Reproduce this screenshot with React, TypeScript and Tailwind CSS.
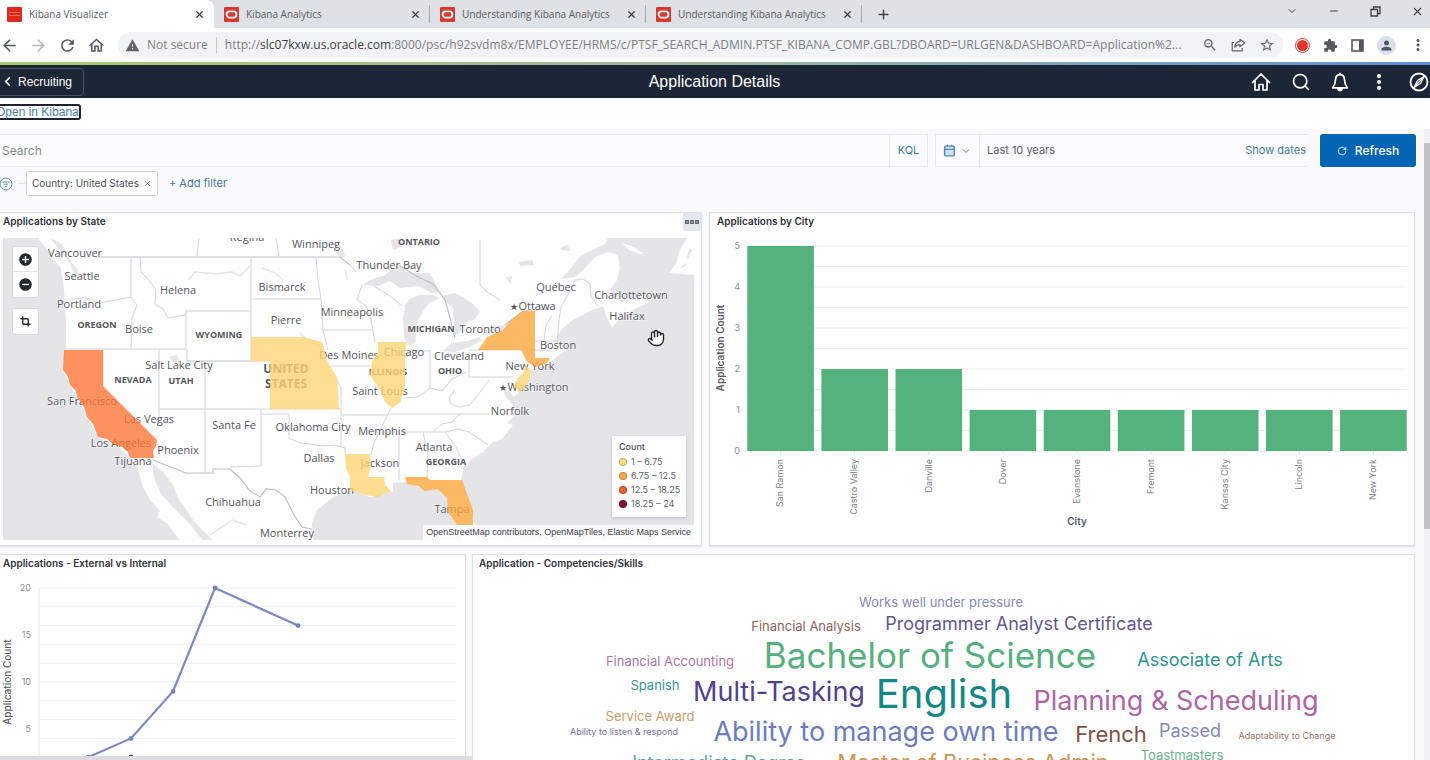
import React from "react";
import {
  Calendar,
  ChevronDown,
  ChevronLeft,
  Crop,
  Hand,
  Minus,
  MoreVertical,
  Plus,
  RotateCw,
  Search,
  X,
} from "lucide-react";
import {
  MdArrowBack,
  MdArrowForward,
  MdExtension,
  MdMoreVert,
  MdOutlineHome,
  MdPerson,
  MdRefresh,
  MdStarBorder,
  MdWarning,
  MdZoomOut,
} from "react-icons/md";

const tabs = [
  { title: "Kibana Visualizer", active: true },
  { title: "Kibana Analytics", active: false },
  { title: "Understanding Kibana Analytics", active: false },
  { title: "Understanding Kibana Analytics", active: false },
];

const cities = [
  { name: "San Ramon", count: 5 },
  { name: "Castro Valley", count: 2 },
  { name: "Danville", count: 2 },
  { name: "Dover", count: 1 },
  { name: "Evanstone", count: 1 },
  { name: "Fremont", count: 1 },
  { name: "Kansas City", count: 1 },
  { name: "Lincoln", count: 1 },
  { name: "New York", count: 1 },
];

// x is the centre of the word, y its baseline
const skills = [
  { text: "Works well under pressure", x: 941, y: 607, size: 13, color: "#8688b8" },
  { text: "Financial Analysis", x: 806, y: 631, size: 13, color: "#8f655a" },
  { text: "Programmer Analyst Certificate", x: 1019, y: 630, size: 18, color: "#61578f" },
  { text: "Bachelor of Science", x: 930, y: 668, size: 35, color: "#54b07c" },
  { text: "Associate of Arts", x: 1210, y: 666, size: 18, color: "#2b9590" },
  { text: "Financial Accounting", x: 670, y: 666, size: 13, color: "#ae76a6" },
  { text: "Spanish", x: 655, y: 690, size: 13, color: "#3a9690" },
  { text: "Multi-Tasking", x: 779, y: 701, size: 27, color: "#523f8e" },
  { text: "English", x: 944, y: 708, size: 40, color: "#148886" },
  { text: "Planning & Scheduling", x: 1176, y: 710, size: 27, color: "#ad65a5" },
  { text: "Service Award", x: 650, y: 721, size: 13, color: "#cb9c69" },
  { text: "Ability to listen & respond", x: 624, y: 735, size: 9, color: "#77709a" },
  { text: "Ability to manage own time", x: 886, y: 741, size: 27, color: "#6c7cbe" },
  { text: "French", x: 1111, y: 742, size: 22, color: "#84503f" },
  { text: "Passed", x: 1190, y: 737, size: 18, color: "#8089b9" },
  { text: "Adaptability to Change", x: 1287, y: 739, size: 9, color: "#98736c" },
  { text: "Toastmasters", x: 1182, y: 760, size: 13, color: "#69b58a" },
  { text: "Intermediate Degree", x: 719, y: 769, size: 18, color: "#5aa79f" },
  { text: "Master of Business Admin", x: 973, y: 770, size: 22, color: "#cf9450" },
];

const places = [
  { name: "Regina", x: 247, y: 241 },
  { name: "Winnipeg", x: 316, y: 248 },
  { name: "Vancouver", x: 75, y: 257 },
  { name: "Thunder Bay", x: 389, y: 269 },
  { name: "Seattle", x: 82, y: 280 },
  { name: "Helena", x: 178, y: 294 },
  { name: "Bismarck", x: 282, y: 291 },
  { name: "Québec", x: 556, y: 291 },
  { name: "Charlottetown", x: 631, y: 299 },
  { name: "Portland", x: 79, y: 308 },
  { name: "Ottawa", x: 533, y: 310, capital: true },
  { name: "Halifax", x: 627, y: 320 },
  { name: "Minneapolis", x: 352, y: 316 },
  { name: "Pierre", x: 286, y: 324 },
  { name: "Boise", x: 139, y: 333 },
  { name: "Toronto", x: 480, y: 333 },
  { name: "Boston", x: 558, y: 349 },
  { name: "Chicago", x: 404, y: 356 },
  { name: "Cleveland", x: 459, y: 360 },
  { name: "Des Moines", x: 349, y: 359 },
  { name: "Salt Lake City", x: 179, y: 369 },
  { name: "New York", x: 530, y: 370 },
  { name: "Washington", x: 534, y: 391, capital: true },
  { name: "Saint Louis", x: 380, y: 395 },
  { name: "San Francisco", x: 82, y: 405 },
  { name: "Norfolk", x: 510, y: 415 },
  { name: "Las Vegas", x: 149, y: 423 },
  { name: "Santa Fe", x: 234, y: 429 },
  { name: "Oklahoma City", x: 313, y: 431 },
  { name: "Memphis", x: 382, y: 435 },
  { name: "Los Angeles", x: 121, y: 447 },
  { name: "Atlanta", x: 434, y: 451 },
  { name: "Phoenix", x: 178, y: 454 },
  { name: "Tijuana", x: 133, y: 465 },
  { name: "Dallas", x: 319, y: 462 },
  { name: "Jackson", x: 380, y: 467 },
  { name: "Houston", x: 332, y: 494 },
  { name: "Chihuahua", x: 233, y: 506 },
  { name: "Tampa", x: 452, y: 513 },
  { name: "Monterrey", x: 287, y: 537 },
];

const regions = [
  { name: "ONTARIO", x: 419, y: 245 },
  { name: "OREGON", x: 97, y: 328 },
  { name: "WYOMING", x: 219, y: 338 },
  { name: "MICHIGAN", x: 431, y: 332 },
  { name: "OHIO", x: 450, y: 374 },
  { name: "ILLINOIS", x: 388, y: 375 },
  { name: "NEVADA", x: 133, y: 383 },
  { name: "UTAH", x: 181, y: 384 },
  { name: "GEORGIA", x: 446, y: 465 },
];

const legend = [
  { label: "1 – 6.75", dot: "bg-[#fdd97e]" },
  { label: "6.75 – 12.5", dot: "bg-[#f8a548]" },
  { label: "12.5 – 18.25", dot: "bg-[#ee5f2b]" },
  { label: "18.25 – 24", dot: "bg-[#80142f]" },
];

const OracleIcon = () => (
  <svg viewBox="0 0 15 15" className="size-[15px] shrink-0" aria-hidden="true">
    <rect width="15" height="15" rx="1" fill="#d8392f" />
    <rect x="2.6" y="4.4" width="9.8" height="6.2" rx="3.1" fill="none" stroke="#fff" strokeWidth="1.8" />
  </svg>
);

const VisualizerIcon = () => (
  <svg viewBox="0 0 15 15" className="size-[15px] shrink-0" aria-hidden="true">
    <rect width="15" height="15" rx="1" fill="#e0281a" />
    <path d="M2 5.5h11M2 8.5h11" stroke="#f2705f" strokeWidth="1" />
  </svg>
);

const BrowserTabs = () => (
  <div className="flex h-7 shrink-0 bg-[#dee1e6]">
    {tabs.map((tab, i) => (
      <div
        key={i}
        className={
          tab.active
            ? "flex w-[214px] items-center rounded-tr-lg bg-white pr-[9px] pl-[7px]"
            : "flex w-[216px] items-center pl-[10px]"
        }
      >
        {tab.active ? <VisualizerIcon /> : <OracleIcon />}
        <span className="ml-[7px] flex-1 overflow-hidden text-[10px] whitespace-nowrap text-[#5b5e63]">{tab.title}</span>
        <button aria-label="Close tab" className="ml-2 text-[#3c4043]">
          <X size={11} strokeWidth={2.6} />
        </button>
        {!tab.active && <span className={i > 0 ? "ml-2 h-[18px] w-px bg-[#a4a7ad]" : "ml-2 h-[18px] w-px bg-[#a4a7ad]"} />}
      </div>
    ))}
    <button aria-label="New tab" className="ml-[14px] text-[#3c4043]">
      <Plus size={15} strokeWidth={2.2} />
    </button>
    <div className="ml-auto flex items-center gap-[30px] pr-[6px] pb-[6px] text-[#3c4043]">
      <button aria-label="Search tabs"><ChevronDown size={12} /></button>
      <button aria-label="Minimize"><Minus size={12} /></button>
      <button aria-label="Restore">
        <svg viewBox="0 0 11 11" className="size-[11px]" fill="none" stroke="currentColor" strokeWidth="1.3">
          <path d="M1 3.5h6.5V10H1zM3.5 3.5V1H10v6.5H7.5" />
        </svg>
      </button>
      <button aria-label="Close"><X size={13} /></button>
    </div>
  </div>
);

const AddressBar = () => (
  <div className="flex h-[34px] shrink-0 items-center bg-white pr-[3px] text-[#55585d]">
    <div className="flex items-center gap-[10px]">
      <button aria-label="Back"><MdArrowBack size={19} /></button>
      <button aria-label="Forward" className="text-[#b5b7ba]"><MdArrowForward size={19} /></button>
      <button aria-label="Reload"><MdRefresh size={19} /></button>
      <button aria-label="Home"><MdOutlineHome size={19} /></button>
    </div>
    <div className="ml-3 flex h-[26px] min-w-0 flex-1 items-center rounded-full bg-[#f1f3f4] pr-2 pl-[7px] text-xs text-[#7c7f84]">
      <MdWarning size={15} className="shrink-0 text-[#5f6368]" />
      <span className="ml-[7px] shrink-0">Not secure</span>
      <span className="mx-2 h-4 w-px bg-[#c4c7ca]" />
      <span className="min-w-0 flex-1 truncate">
        http://<span className="text-[#3c4043]">slc07kxw.us.oracle.com</span>
        :8000/psc/h92svdm8x/EMPLOYEE/HRMS/c/PTSF_SEARCH_ADMIN.PTSF_KIBANA_COMP.GBL?DBOARD=URLGEN&amp;DASHBOARD=Application%2...
      </span>
      <div className="ml-2 flex items-center gap-[13px] text-[#5f6368]">
        <button aria-label="Zoom"><MdZoomOut size={16} /></button>
        <button aria-label="Share">
          <svg viewBox="0 0 15 14" className="h-[14px] w-[15px]" fill="none" stroke="currentColor" strokeWidth="1.2" strokeLinejoin="round">
            <path d="M3 4.5H1.2v8.3h10V10" />
            <path d="M9 1.3 13.8 5 9 8.7V6.6C6.6 6.6 5 7.4 3.8 9.3 4 6 5.8 3.7 9 3.4z" />
          </svg>
        </button>
        <button aria-label="Bookmark"><MdStarBorder size={16} /></button>
      </div>
    </div>
    <div className="ml-3 flex items-center gap-[13px]">
      <button aria-label="Record" className="flex size-[15px] items-center justify-center rounded-full border border-[#e5352d]">
        <span className="size-[11px] rounded-full bg-[#e5352d]" />
      </button>
      <button aria-label="Extensions"><MdExtension size={15} /></button>
      <button aria-label="Side panel">
        <svg viewBox="0 0 13 13" className="size-[13px]" fill="none">
          <rect x="1" y="1" width="11" height="11" stroke="currentColor" strokeWidth="1.6" />
          <path d="M8 1h4v11H8z" fill="currentColor" />
        </svg>
      </button>
      <button aria-label="Profile" className="flex size-[19px] items-center justify-center rounded-full bg-[#dcdfea] text-[#4c5468]">
        <MdPerson size={15} />
      </button>
      <button aria-label="Menu"><MdMoreVert size={18} /></button>
    </div>
  </div>
);

const AppHeader = () => (
  <header className="grid h-[33px] shrink-0 grid-cols-[1fr_auto_1fr] items-center bg-[#1d2636] pr-px font-['Liberation_Sans',sans-serif] text-white">
    <button className="-ml-[6px] flex h-7 items-center gap-[3px] justify-self-start rounded-sm border border-[#4a5364] pr-[11px] pl-[5px] text-xs">
      <ChevronLeft size={15} strokeWidth={2.6} />
      Recruiting
    </button>
    <h1 className="text-base">Application Details</h1>
    <div className="flex items-center gap-5 justify-self-end">
      <button aria-label="Home">
        <svg viewBox="0 0 20 20" className="size-5" fill="none" stroke="currentColor" strokeWidth="1.7" strokeLinejoin="round" strokeLinecap="round">
          <path d="M1.5 10.5 10 2l8.500 8.500M4 9v9h4v-5.500h4V18h4V9" />
        </svg>
      </button>
      <button aria-label="Search">
        <Search size={20} strokeWidth={2} />
      </button>
      <button aria-label="Notifications">
        <svg viewBox="0 0 18 20" className="h-5 w-[18px]" fill="none" stroke="currentColor" strokeWidth="1.7" strokeLinejoin="round">
          <path d="M9 2.600c-2.700 0-4.300 2-4.400 4.700-.1 3.600-.8 5.800-3 8.500h14.800c-2.200-2.700-2.900-4.900-3-8.500C13.300 4.600 11.700 2.600 9 2.600zM9 2.600V.8" />
          <path d="M7 16.500a2 2 0 0 0 4 0z" fill="currentColor" />
        </svg>
      </button>
      <button aria-label="Actions"><MoreVertical size={20} strokeWidth={3} /></button>
      <button aria-label="NavBar">
        <svg viewBox="0 0 20 20" className="size-5" fill="none" stroke="currentColor" strokeWidth="1.8">
          <circle cx="10" cy="10" r="8.500" />
          <path d="M15 4.500 11.500 11.500 5 15.500 8.500 8.500z" strokeWidth="1.3" strokeLinejoin="round" />
          <path d="M4.500 16 15.500 4" strokeWidth="1.2" />
        </svg>
      </button>
    </div>
  </header>
);

const QueryBar = () => (
  <div className="flex h-[33px] items-stretch pr-2 text-[11px] text-[#5a5e68]">
    <div className="flex flex-1 border-y border-r border-[#e6e8ef] bg-[#fcfcfe]">
      <input
        aria-label="Search"
        placeholder="Search"
        className="min-w-0 flex-1 bg-transparent pl-[2px] text-xs placeholder:text-[#85888f] focus:outline-none"
      />
      <button className="w-[38px] border-l border-[#e6e8ef] text-[#44799f]">KQL</button>
    </div>
    <div className="ml-[7px] flex w-[373px] items-center border-y border-l border-[#e6e8ef] bg-[#fcfcfe] pr-[2px]">
      <button aria-label="Date quick select" className="flex h-full items-center gap-1 border-r border-[#e6e8ef] px-[7px] text-[#5488b0]">
        <Calendar size={13} strokeWidth={2.6} fill="#cfe1ef" />
        <ChevronDown size={12} />
      </button>
      <span className="ml-[7px]">Last 10 years</span>
      <button className="ml-auto text-[#44799f]">Show dates</button>
    </div>
    <button className="ml-3 flex w-24 items-center justify-center gap-2 rounded-[3px] bg-[#0565b5] text-xs font-medium text-white">
      <RotateCw size={10} strokeWidth={2} />
      Refresh
    </button>
  </div>
);

const FilterBar = () => (
  <div className="mt-1 flex h-[25px] items-center text-[11px]">
    <button aria-label="Filter options" className="text-[#5b92b5]">
      <svg viewBox="0 0 14 14" className="-ml-px size-[14px]" fill="none" stroke="currentColor">
        <circle cx="7" cy="7" r="6" />
        <path d="M3.500 5h7M4.800 7.200h4.400M6 9.400h2" />
      </svg>
    </button>
    <span className="ml-1 h-px w-2 bg-[#dfe2ea]" />
    <span className="ml-px flex h-full items-center gap-1 rounded-[2px] border border-[#d0d2da] bg-white px-[5px] text-[10px] text-[#4b4e57]">
      Country: United States
      <button aria-label="Remove filter"><X size={9} /></button>
    </span>
    <button className="ml-[11px] text-[#44799f]">+ Add filter</button>
  </div>
);

interface PanelProps {
  title: string;
  className?: string;
  action?: React.ReactNode;
  children: React.ReactNode;
}

const Panel: React.FC<PanelProps> = ({ title, className = "", action, children }) => (
  <section className={`border border-[#dddfe8] bg-white shadow-[0_1px_1px_#e4e6ee] ${className}`}>
    <div className="flex h-[25px] items-start justify-between">
      <h2 className="text-[10px] leading-4 font-semibold text-[#2f3138]">{title}</h2>
      {action}
    </div>
    {children}
  </section>
);

const StateMap = () => (
  <div className="relative">
    <svg viewBox="3 238 691 302" className="block w-full font-['Open_Sans',sans-serif]" role="img" aria-label="Applications by State">
      <rect x="3" y="238" width="691" height="302" fill="#e5e5e7" />
      {/* mainland */}
      <path
        fill="#fefefe"
        d="M38 238 48 250 56 262 61 268 64 290 66 320 66 347 63 370 70 385 77 397 87 417 98 437 120 448 130 458 137 466 143 487 150 500 160 511 157 517 168 524 174 533 180 540H313L312 523 317 510 333 497 350 490 370 497 393 492 393 483 405 482 427 490 440 488 447 498 450 515 457 525 463 540H477L473 515 467 497 461 481 463 468 472 459 483 452 493 442 502 439 513 425 507 423 514 416 510 410 513 405 505 396 502 380 507 390 514 397 522 390 529 379 531 370 550 362 562 353 567 350 558 344 557 336 563 328 573 320 590 311 603 306 607 318 612 328 621 317 637 308 650 302 645 298 622 302 613 297 610 290 617 280 620 268 618 255 608 252 595 257 583 270 575 277 561 279 572 267 580 256 592 250 605 244 608 238z"
      />
      <path fill="#fefefe" d="M687 238 680 250 676 263 669 273 694 275V238z" />
      <path fill="#e5e5e7" d="M686 258 690 248 692 250 688 259zM680 268 685 263 686 266z" />
      <path fill="#fefefe" d="M622 243 634 247 644 254 640 254 629 250zM636 301 648 298 642 303z" />
      {/* gulf of california, lakes */}
      <g fill="#e5e5e7">
        <path d="M152 463 163 472 173 485 177 496 193 520 207 535 213 540H202L190 524 173 507 161 494 154 478z" />
        <path d="M362 285 375 278 385 275 393 267 400 264 406 272 418 273 430 273 435 283 440 292 432 293 418 286 400 288 390 281 378 286z" />
        <path d="M405 305 410 299 419 295 432 295 440 298 429 303 424 310 418 320 416 333 415 343 409 345 404 337 403 318z" />
        <path d="M441 296 455 293 463 297 472 303 480 312 474 320 466 322 461 332 452 338 454 325 453 308 446 302z" />
        <path d="M443 351 452 343 468 341 479 337 482 340 470 347 455 352z" />
        <path d="M483 332 495 326 505 325 502 332 490 334z" />
        <path d="M334 243 342 247 345 257 340 258 336 252zM391 240 400 238 402 247 393 250zM519 262 532 260 534 265 520 266zM505 277 512 276 511 284zM560 248 567 245 571 251 562 250zM50 238 62 244 71 262 78 270 76 279 70 264 60 250zM169 357 177 355 180 363 173 362z" />
      </g>
      {/* borders */}
      <g fill="none" stroke="#d3d4da" strokeWidth="1">
        <path d="M70 300 85 297 100 303 131 297V257M131 297 137 305 132 318 131 349M65 349H186V311H251M187 349V361H251M140 257 141 272 148 279 156 290 155 304 163 309 168 318 185 315 187 310M159 349V409 418L154 424M205 361V473M186 361H205M205 361H270M159 409H341M261 409V466L230 467M251 257V361M251 299H320M316 257 318 280 321 299 323 330 328 350M321 330H372M329 366H370M103 349V386M261 414H289V438L300 443 310 444 322 446 334 445 345 448V454M341 409V447M337 380 341 388 341 409M341 415H388M362 285 357 300 366 306 371 320 375 342" />
        <path d="M350 265 356 272M391 408 387 416 380 430 374 443 371 455M390 414H490M370 432H445M399 432V480M423 432 428 455 427 478M406 479H427M445 432 455 445 463 462M433 432 442 424 452 422 460 414M445 432 458 429 469 432 488 445M430 350V388M407 351H430M469 352V377H513M404 398 418 397 430 388 442 391 452 379 466 372M451 404 459 407 470 405 478 395 489 380M451 404 449 398 455 390M521 350 469 350M374 286 390 296 402 306M199 238 197 256M276 238 279 256M480 240V285L487 292 500 300" />
        <path d="M535 311 547 309M544 340 546 325 552 315M535 350 553 351M557 344 559 320 561 307 568 295 575 280 583 279 590 284 591 297 598 306M535 341H557" />
      </g>
      <g fill="none" stroke="#bfc0c8" strokeWidth="1.2">
        <path d="M100 257H340L350 265M400 266 418 277 433 284 445 300 450 318 455 338M153 460 186 473H205 213V469H230L240 478 250 491 260 497 266 489 276 490 285 497 294 515 302 527 312 529M505 325 523 311 548 309" />
      </g>
      <path
        d="M188 280 195 272 215 274 232 272 240 276 250 266M262 268 275 273 283 280M210 535 225 525 232 520 247 525M322 430 330 422M300 333 308 341 322 347M345 270 348 280"
        fill="none"
        stroke="#e3e4e9"
        strokeWidth="1.4"
      />
      <g textAnchor="middle" fill="#55565d" stroke="#fff" strokeWidth="1.5" strokeOpacity="0.5" paintOrder="stroke">
        {places.map((place) => (
          <text key={place.name} x={place.x} y={place.y} fontSize="11">
            {place.capital && <tspan fontSize="9">★</tspan>}
            {place.name}
          </text>
        ))}
        {regions.map((region) => (
          <text key={region.name} x={region.x} y={region.y} fontSize="9" fontWeight="700">
            {region.name}
          </text>
        ))}
        <text x="286" y="373" fontSize="12" fontWeight="700">UNITED</text>
        <text x="286" y="388" fontSize="12" fontWeight="700">STATES</text>
      </g>
      {/* states with applications */}
      <g fillOpacity="0.8">
        <path fill="#fe7638" d="M64 350H103V386L157 440 156 446 153 451 154 458H130L128 452 122 447 113 444 107 439 98 437 93 424 87 417 84 407 77 397 76 391 70 385 68 377 63 370z" />
        <path fill="#fcd573" d="M251 337H303L322 342 325 352 328 363 337 377 339 409H270V361H251z" />
        <path fill="#fcd573" d="M378 342H407L405 352V388L400 403 392 408 385 402 380 390 370 375 372 362 378 352z" />
        <path fill="#fcd573" d="M345 454H370L371 466 368 477H384L385 485 392 492 384 494 378 497 365 495 350 490V477L346 468z" />
        <path fill="#fcd573" d="M526 365 531 371 529 381 520 393 514 386 518 378 523 373z" />
        <path fill="#fda63d" d="M523 311H535V358L550 358 547 363 536 367 527 362 521 350H478L484 342 487 337 503 330 510 321z" />
        <path fill="#fda63d" d="M405 477H427L430 480H462L468 497 473 510V525H457L448 512 447 498 438 489 425 491 418 486 407 484z" />
      </g>
    </svg>
    <div className="absolute top-2 left-[9px] flex flex-col gap-[10px]">
      <div className="flex flex-col divide-y divide-[#e3e4ea] rounded-[3px] border border-[#d5d7df] bg-white text-[#25272d]">
        {["Zoom in", "Zoom out"].map((label) => (
          <button key={label} aria-label={label} className="flex h-[25px] w-[25px] items-center justify-center">
            <svg viewBox="0 0 13 13" className="size-[13px]">
              <circle cx="6.500" cy="6.500" r="6.300" fill="currentColor" />
              <path d={label === "Zoom in" ? "M3 6.500h7M6.500 3v7" : "M3 6.500h7"} stroke="#fff" strokeWidth="1.3" />
            </svg>
          </button>
        ))}
      </div>
      <button aria-label="Draw bounds" className="flex size-[27px] items-center justify-center rounded-[3px] border border-[#d5d7df] bg-white text-[#25272d]">
        <Crop size={11} strokeWidth={3} />
      </button>
    </div>
    <div className="absolute top-[91px] left-[644px]">
      <Hand size={18} strokeWidth={1.8} fill="#fff" className="text-[#222]" />
    </div>
    <div className="absolute right-2 bottom-[23px] w-[74px] bg-white pt-[2px] pr-1 pb-[6px] pl-[7px] shadow-[0_1px_3px_#b9bbc4]">
      <p className="text-[9px] leading-[17px] font-medium text-[#4d5059]">Count</p>
      {legend.map((item) => (
        <p key={item.label} className="flex items-center gap-1 text-[9px] leading-[14px] whitespace-nowrap text-[#5b5e67]">
          <span className={`size-2 shrink-0 rounded-full border border-black/20 ${item.dot}`} />
          {item.label}
        </p>
      ))}
    </div>
    <p className="absolute right-0 bottom-0 bg-white/80 px-[3px] font-['Liberation_Sans',sans-serif] text-[9px] leading-[15px] text-[#3e4047]">
      <a href="#osm">OpenStreetMap contributors</a>, <a href="#tiles">OpenMapTiles</a>, <a href="#ems">Elastic Maps Service</a>
    </p>
  </div>
);

const CityChart = () => {
  const bottom = 451;
  const unit = 41;
  const step = 74.1;

  return (
    <svg viewBox="710 238 704 307" className="block w-full" role="img" aria-label="Applications by City">
      {Array.from({ length: 11 }, (_, i) => (
        <path key={i} d={`M747 ${bottom - (i * unit) / 2}H1407`} stroke="#ecedf1" />
      ))}
      {cities.map((city, i) => {
        const x = 747.3 + i * step;
        return (
          <g key={city.name}>
            <rect x={x} y={bottom - city.count * unit} width="66.6" height={city.count * unit} fill="#54b27d" />
            <path d={`M${x + 33.3} ${bottom}v4`} stroke="#e2e4e9" />
            <text
              transform={`translate(${x + 36} 459) rotate(-90)`}
              textAnchor="end"
              fontSize="9"
              fill="#7c7f87"
            >
              {city.name}
            </text>
          </g>
        );
      })}
      <g fontSize="9" fill="#8b8e96" textAnchor="end">
        {[0, 1, 2, 3, 4, 5].map((n) => (
          <text key={n} x="740" y={bottom - n * unit + 3}>{n}</text>
        ))}
      </g>
      <g fontSize="10" fontWeight="600" fill="#565a64" textAnchor="middle">
        <text transform="translate(724 348) rotate(-90)">Application Count</text>
        <text x="1077" y="525">City</text>
      </g>
    </svg>
  );
};

const SourceChart = () => {
  const y = (value: number) => 588 + (20 - value) * 9.4;
  const points = [
    { x: 88, value: 2 },
    { x: 131, value: 4 },
    { x: 173, value: 9 },
    { x: 215, value: 20 },
    { x: 298, value: 16 },
  ];

  return (
    <svg viewBox="0 580 465 205" className="block w-full" role="img" aria-label="Applications - External vs Internal">
      {Array.from({ length: 11 }, (_, i) => (
        <path key={i} d={`M39 ${y(i * 2)}H457`} stroke="#edeff3" />
      ))}
      <path d="M39 588V776" stroke="#e3e6ec" />
      <g fontSize="9" fill="#8b8e96" textAnchor="end">
        {[5, 10, 15, 20].map((n) => (
          <text key={n} x="31" y={y(n) + 3}>{n}</text>
        ))}
      </g>
      <text transform="translate(11 682) rotate(-90)" textAnchor="middle" fontSize="10" fontWeight="500" fill="#565a64">
        Application Count
      </text>
      <path d={`M${points.map((p) => `${p.x} ${y(p.value)}`).join("L")}`} fill="none" stroke="#7b8bc2" strokeWidth="2.2" />
      {points.map((p) => (
        <circle key={p.x} cx={p.x} cy={y(p.value)} r="2.4" fill="#7383bf" />
      ))}
      <path d="M131 757 173 766" stroke="#4b4470" strokeWidth="2" />
      <circle cx="131" cy="757" r="2.4" fill="#4b4470" />
    </svg>
  );
};

const SkillCloud = () => (
  <svg viewBox="473 580 941 205" className="block w-full" role="img" aria-label="Application - Competencies/Skills">
    {skills.map((skill) => (
      <text key={skill.text} x={skill.x} y={skill.y} fontSize={skill.size} fill={skill.color} textAnchor="middle">
        {skill.text}
      </text>
    ))}
  </svg>
);

const Dashboard = () => (
  <main className="relative flex min-h-0 flex-1 overflow-hidden bg-[#fafafd] font-['Inter',sans-serif]">
    <div className="min-w-0 flex-1 pt-[5px]">
      <QueryBar />
      <FilterBar />
      <div className="mt-4 flex flex-col gap-2 pr-[9px]">
        <div className="grid grid-cols-[702fr_706fr] gap-[7px]">
          <Panel
            title="Applications by State"
            className="border-l-0 pr-[7px] pb-[5px] pl-[3px]"
            action={
              <button aria-label="Panel options" className="-mr-[7px] flex h-[18px] w-[18px] items-center justify-center bg-[#e4e6ed] text-[#63666f]">
                <svg viewBox="0 0 14 4" className="h-1 w-[14px]" fill="none" stroke="currentColor" strokeWidth="1.4">
                  <rect x="0.7" y="0.7" width="2.6" height="2.6" />
                  <rect x="5.7" y="0.7" width="2.6" height="2.6" />
                  <rect x="10.7" y="0.7" width="2.6" height="2.6" />
                </svg>
              </button>
            }
          >
            <StateMap />
          </Panel>
          <Panel title="Applications by City" className="[&_h2]:pl-[7px]">
            <CityChart />
          </Panel>
        </div>
        <div className="grid grid-cols-[466fr_943fr] gap-[6px]">
          <Panel title="Applications - External vs Internal" className="border-l-0 [&_h2]:pl-[3px]">
            <SourceChart />
          </Panel>
          <Panel title="Application - Competencies/Skills" className="[&_h2]:pl-[6px]">
            <SkillCloud />
          </Panel>
        </div>
      </div>
    </div>
    <div className="flex w-[6px] flex-col bg-[#f1f1f4] pt-[14px]">
      <span className="h-[386px] bg-[#c1c1c4]" />
    </div>
    <div className="absolute bottom-0 left-0 h-1 w-[33%] bg-[#dcdce0]" />
  </main>
);

export default function App() {
  return (
    <div className="flex h-screen flex-col overflow-hidden bg-white font-['Open_Sans',sans-serif]">
      <BrowserTabs />
      <AddressBar />
      <div className="h-[3px] shrink-0 bg-linear-to-r from-[#a6cb6c] via-[#9cba9c] to-[#5b8fd6]" />
      <AppHeader />
      <div className="flex h-[31px] shrink-0 items-start pt-[6px] font-['Liberation_Sans',sans-serif]">
        <a href="#kibana" className="-ml-[6px] rounded-[3px] border-2 border-[#1b2430] text-xs leading-3 text-[#4a7fa6]">
          Open in Kibana
        </a>
      </div>
      <Dashboard />
    </div>
  );
}
